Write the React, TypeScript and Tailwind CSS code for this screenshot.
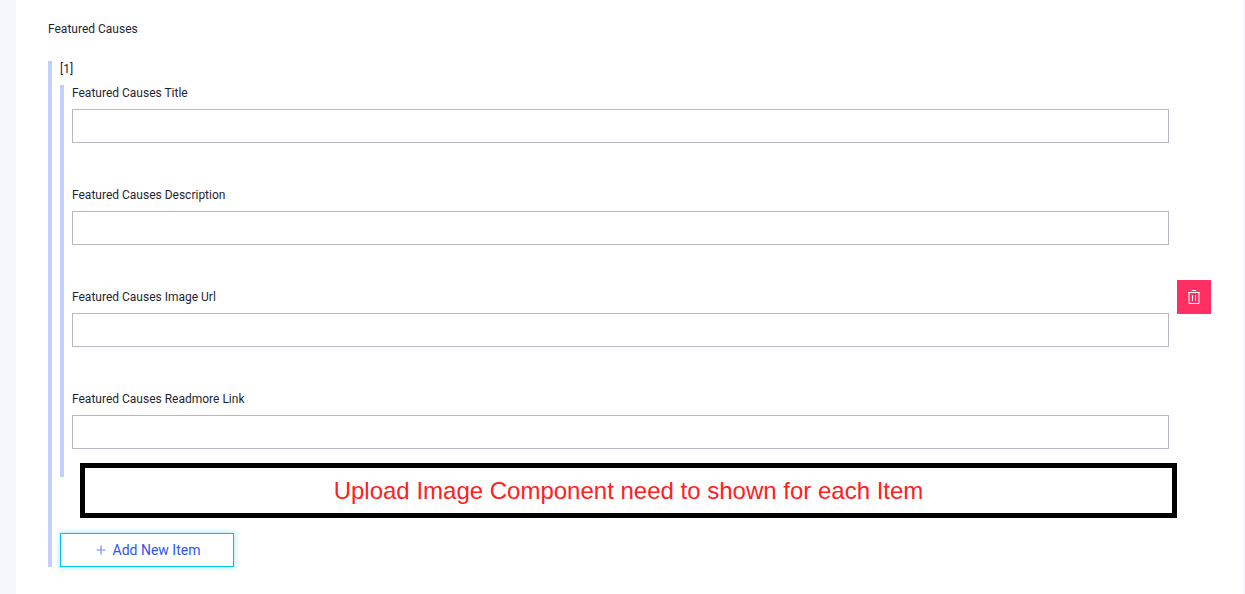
import React from "react";
import { Plus } from "lucide-react";

const fields = [
  "Featured Causes Title",
  "Featured Causes Description",
  "Featured Causes Image Url",
  "Featured Causes Readmore Link",
];

function TrashIcon() {
  return (
    <svg width="12" height="14" viewBox="0 0 12 14" fill="none" stroke="#fff" strokeWidth="1">
      <path d="M0 2.5H12" />
      <path d="M3.7 0.5H8.2" />
      <path d="M1 2.5V13.5H11V2.5" />
      <path d="M4.5 5V10.8" />
      <path d="M7.5 5V10.8" />
    </svg>
  );
}

function Field({ label }: { label: string }) {
  return (
    <div className="mb-[44px] last:mb-0">
      <div className="h-6 text-[12px] leading-4 text-[#1f1f33]">{label}</div>
      <input className="block w-full h-[34px] border border-[#b9b9c6] bg-white outline-none" />
    </div>
  );
}

export default function App() {
  return (
    <div className="h-[594px] overflow-hidden bg-[#f5f6fb] pl-4 pr-[2px] font-['Roboto',sans-serif]">
      <div className="h-full bg-white pl-8 pt-[21px]">
        <div className="h-[40px] text-[12px] leading-4 text-[#1f1f33]">Featured Causes</div>

        <div className="w-[1163px] h-[506px] border-l-4 border-[#c3d0fd] pl-2">
          <div className="h-6 text-[12px] leading-[16px] text-[#1f1f33]">[1]</div>

          <div className="flex items-center">
            <div className="w-[1109px] border-l-4 border-[#c3d0fd] pl-2 pb-[28px]">
              {fields.map((f) => (
                <Field key={f} label={f} />
              ))}
            </div>
            <button className="ml-2 mt-8 flex h-[34px] w-[34px] items-center justify-center bg-[#ff2e63]">
              <TrashIcon />
            </button>
          </div>

          <div className="relative -mt-[14px] ml-5 flex h-[55px] w-[1097px] items-center justify-center border-[5px] border-black bg-white font-['Liberation_Sans',sans-serif] text-[24px] text-[#ff2020]">
            Upload Image Component need to shown for each Item
          </div>

          <button className="mt-[15px] flex h-[34px] w-[174px] items-center justify-center gap-[5px] border border-[#00c2ee] bg-white text-[14px] text-[#2f55f0] shadow-[0_0_5px_rgba(0,194,238,0.45)]">
            <Plus size={14} strokeWidth={2} className="text-[#6f8bf5]" />
            Add New Item
          </button>
        </div>
      </div>
    </div>
  );
}
